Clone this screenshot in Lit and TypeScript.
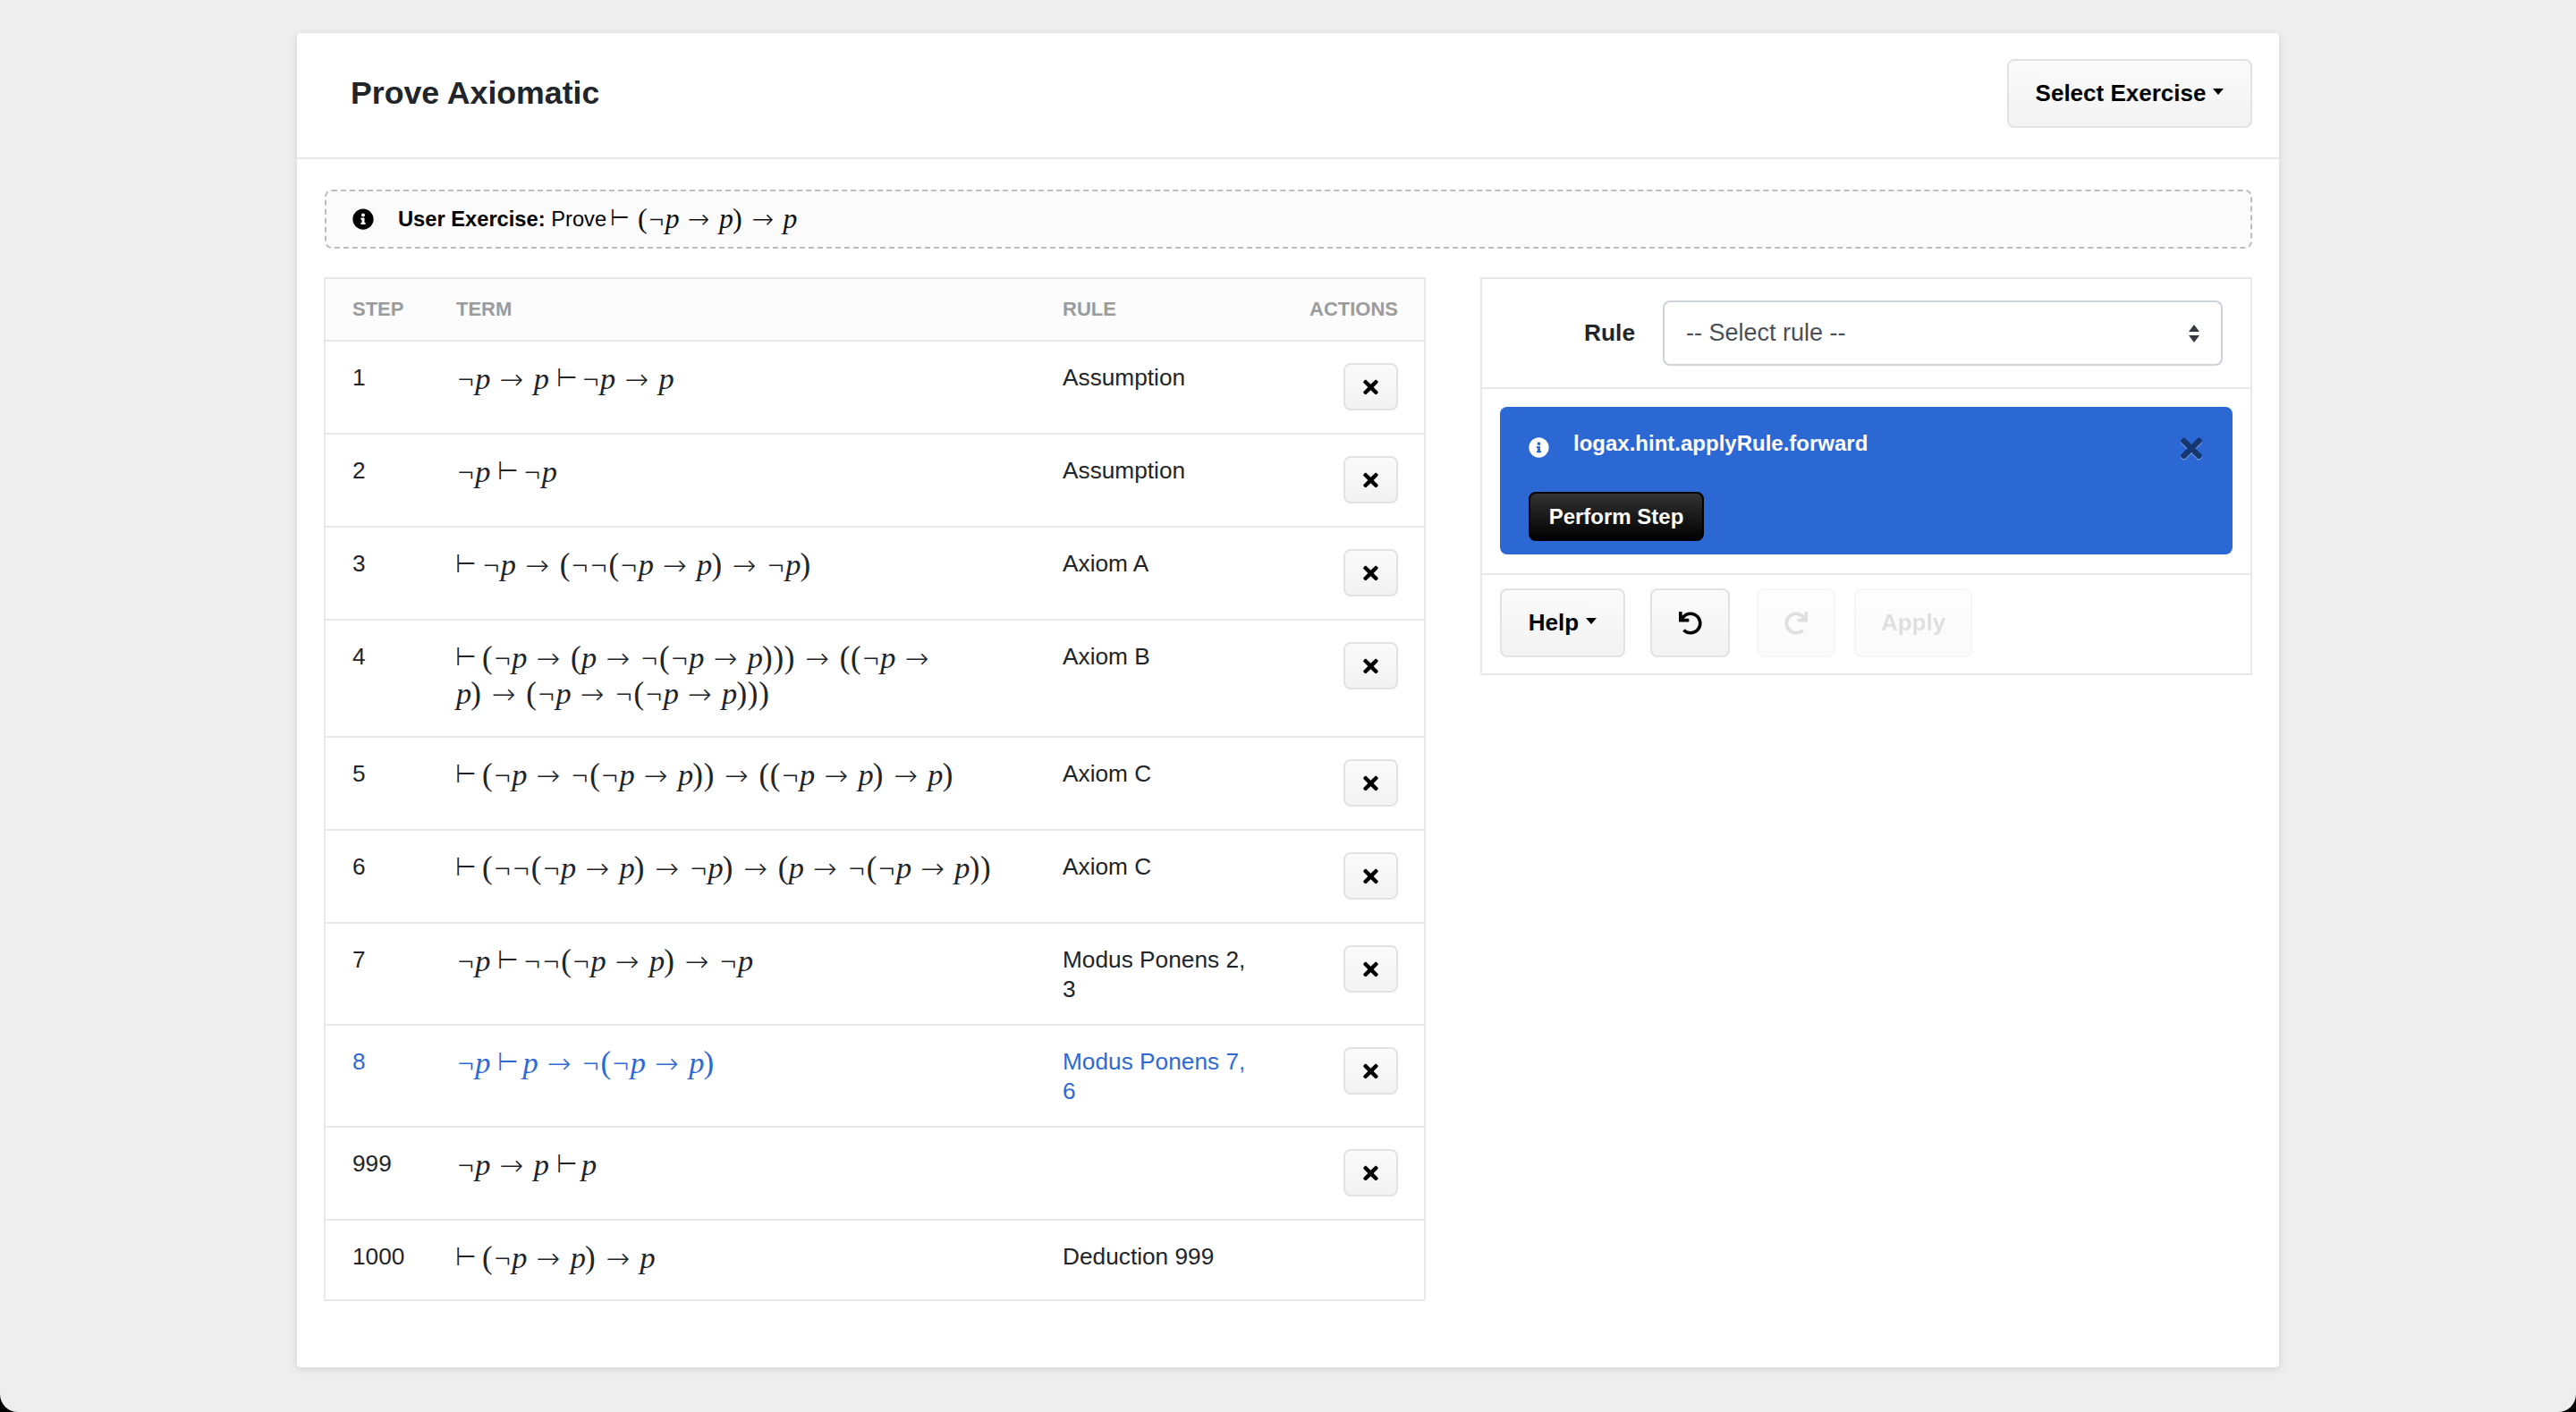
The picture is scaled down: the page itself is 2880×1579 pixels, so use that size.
import { LitElement, html, css, svg } from "lit";
import { customElement } from "lit/decorators.js";

// FontAwesome 5 style icons
const infoPath = "M256 8C119 8 8 119.1 8 256c0 137 111 248 248 248s248-111 248-248C504 119.1 393 8 256 8zm0 110c23.2 0 42 18.8 42 42s-18.8 42-42 42-42-18.8-42-42 18.8-42 42-42zm56 254c0 6.6-5.4 12-12 12h-88c-6.6 0-12-5.4-12-12v-24c0-6.6 5.4-12 12-12h12v-64h-12c-6.6 0-12-5.4-12-12v-24c0-6.6 5.4-12 12-12h64c6.6 0 12 5.4 12 12v100h12c6.6 0 12 5.4 12 12v24z";
const timesPath = "M242.72 256l100.07-100.07c12.28-12.28 12.28-32.19 0-44.48l-22.24-22.24c-12.28-12.28-32.19-12.28-44.48 0L176 189.28 75.93 89.21c-12.28-12.28-32.19-12.28-44.48 0L9.21 111.45c-12.28 12.28-12.28 32.19 0 44.48L109.28 256 9.21 356.07c-12.28 12.28-12.28 32.19 0 44.48l22.24 22.24c12.28 12.28 32.2 12.28 44.48 0L176 322.72l100.07 100.07c12.28 12.28 32.2 12.28 44.48 0l22.24-22.24c12.28-12.28 12.28-32.19 0-44.48L242.72 256z";
const undoPath = "M212.333 224.333H12c-6.627 0-12-5.373-12-12V12C0 5.373 5.373 0 12 0h48c6.627 0 12 5.373 12 12v78.112C117.773 39.279 184.26 7.47 258.175 8.007c136.906.994 246.448 111.623 246.157 248.532C504.041 393.258 393.12 504 256.333 504c-64.089 0-122.496-24.313-166.51-64.215-5.099-4.622-5.334-12.554-.467-17.42l33.967-33.967c4.474-4.474 11.662-4.717 16.401-.525C170.76 415.336 211.58 432 256.333 432c97.268 0 176-78.716 176-176 0-97.267-78.716-176-176-176-58.496 0-110.28 28.476-142.274 72.333h98.274c6.627 0 12 5.373 12 12v48c0 6.627-5.373 12-12 12z";
const redoPath = "M500.33 0h-47.41a12 12 0 0 0-12 12.57l4 82.76A247.42 247.42 0 0 0 256 8C119.34 8 7.9 119.53 8 256.19 8.1 393.07 119.1 504 256 504a247.1 247.1 0 0 0 166.18-63.91 12 12 0 0 0 .48-17.43l-34-34a12 12 0 0 0-16.38-.55A176 176 0 1 1 402.1 157.8l-101.53-4.87a12 12 0 0 0-12.57 12v47.41a12 12 0 0 0 12 12h200.33a12 12 0 0 0 12-12V12a12 12 0 0 0-12-12z";

const icon = (d: string, cls: string, vb = "0 0 512 512") =>
  html`<svg class=${cls} viewBox=${vb} fill="currentColor">${svg`<path d=${d}></path>`}</svg>`;

// formulas are written with ~ for negation, > for implication, | for turnstile
const tokenClass: Record<string, string> = {
  "p": "mi",
  "~": "neg",
  ">": "arrow",
  "|": "turn",
  "(": "par",
  ")": "par",
};
const glyphs: Record<string, string> = { "p": "p", "~": "¬", ">": "→", "|": "⊢", "(": "(", ")": ")" };

const formula = (src: string) =>
  src.split("\n").map(
    (line) => html`<div class="mline">${[...line].map(
      (c, i) => html`<span class="${tokenClass[c]}${i === 0 ? " first" : ""}">${glyphs[c]}</span>`
    )}</div>`
  );

const steps = [
  { n: "1", term: "~p>p|~p>p", rule: "Assumption", del: true },
  { n: "2", term: "~p|~p", rule: "Assumption", del: true },
  { n: "3", term: "|~p>(~~(~p>p)>~p)", rule: "Axiom A", del: true },
  { n: "4", term: "|(~p>(p>~(~p>p)))>((~p>\np)>(~p>~(~p>p)))", rule: "Axiom B", del: true },
  { n: "5", term: "|(~p>~(~p>p))>((~p>p)>p)", rule: "Axiom C", del: true },
  { n: "6", term: "|(~~(~p>p)>~p)>(p>~(~p>p))", rule: "Axiom C", del: true },
  { n: "7", term: "~p|~~(~p>p)>~p", rule: "Modus Ponens 2, 3", del: true },
  { n: "8", term: "~p|p>~(~p>p)", rule: "Modus Ponens 7, 6", del: true, active: true },
  { n: "999", term: "~p>p|p", rule: "", del: true },
  { n: "1000", term: "|(~p>p)>p", rule: "Deduction 999", del: false },
];

@customElement("app-root")
export class AppRoot extends LitElement {
  static styles = css`
    :host {
      display: block;
      background: #000;
      font-family: "Liberation Sans", Arial, sans-serif;
      font-size: 26.25px;
      color: #212529;
    }
    * {
      box-sizing: border-box;
    }
    .page {
      height: 1579px;
      padding-top: 37px;
      background: #eeeeee;
      border-radius: 0 0 20px 20px;
    }
    .card {
      width: 2216px;
      height: 1492px;
      margin: 0 auto;
      background: #fff;
      border-radius: 4px;
      box-shadow: 0 2px 8px rgba(0, 0, 0, 0.12);
    }
    .head {
      display: flex;
      align-items: center;
      justify-content: space-between;
      height: 141px;
      padding: 0 30px 4px 60px;
      border-bottom: 2px solid #e8e8e8;
    }
    h1 {
      margin: 0;
      font-size: 35.7px;
      font-weight: 700;
    }
    .content {
      padding: 34px 30px 0 31px;
    }
    .exercise {
      display: flex;
      align-items: center;
      height: 66px;
      padding: 0 29px;
      border: 2px dashed #bdbdbd;
      border-radius: 8px;
      background: #fbfbfb;
      color: #000;
      font-size: 23.7px;
      white-space: pre;
    }
    .exercise .info {
      margin-right: 27px;
    }
    .info {
      width: 24px;
      height: 24px;
      flex: none;
    }
    .columns {
      display: grid;
      grid-template-columns: 1231px 863px;
      gap: 61px;
      margin-top: 32px;
      align-items: start;
    }

    table {
      width: 1232px;
      margin-left: -1px;
      table-layout: fixed;
      border-collapse: collapse;
      border: 2px solid #e8e8e8;
    }
    col.c-step { width: 131px; }
    col.c-term { width: 678px; }
    col.c-rule { width: 264px; }
    th {
      height: 70px;
      padding: 0 16px;
      text-align: left;
      vertical-align: middle;
      font-size: 22px;
      font-weight: 700;
      color: #9b9b9b;
      text-transform: uppercase;
      background: #fcfcfc;
      border-bottom: 2px solid #e8e8e8;
    }
    td {
      padding: 24px 16px 22px;
      vertical-align: top;
      line-height: 33px;
      border-bottom: 2px solid #e8e8e8;
    }
    tr:last-child td {
      border-bottom: 0;
    }
    th:first-child,
    td:first-child {
      padding-left: 30px;
      padding-right: 0;
    }
    th:last-child {
      text-align: right;
      padding: 0 29px 0 0;
    }
    td.term {
      padding: 20px 16px 27px;
    }
    td.rule {
      padding-right: 40px;
    }
    td.act {
      padding: 24px 29px 25px 0;
      text-align: right;
    }
    tr.active td {
      color: #2f6ad2;
    }
    .mline {
      white-space: nowrap;
      height: 41px;
      line-height: 41px;
      font-family: "Liberation Serif", "DejaVu Serif", serif;
      font-size: 31.8px;
    }
    .exercise .mline {
      color: #111;
      font-size: 29.3px;
      margin: 0 0 3px 5px;
    }
    .exercise .turn.first {
      margin-right: 0.5em;
    }
    .mline span {
      display: inline-block;
      text-align: center;
    }
    .mi {
      font-style: italic;
      font-size: 1.08em;
      width: 0.466em;
    }
    .neg {
      width: 0.667em;
    }
    .par {
      width: 0.354em;
      font-size: 1.1em;
      font-weight: 400;
    }
    /* KaTeX relation spacing: 0.2778em on each side of the glyph */
    .arrow {
      width: 1em;
      margin: 0 0.2778em;
      font-family: "DejaVu Sans", sans-serif;
      font-weight: 200;
    }
    .turn {
      width: 0.719em;
      margin: 0 0.33em;
      font-family: "DejaVu Sans", sans-serif;
      font-weight: 200;
      font-size: 0.85em;
      vertical-align: 3px;
    }
    .turn.first {
      margin-left: -0.03em;
      margin-right: 0.37em;
    }

    .btn {
      display: inline-flex;
      align-items: center;
      justify-content: center;
      font: 700 26px "Liberation Sans", Arial, sans-serif;
      color: #000;
      background: linear-gradient(#fbfbfb, #f2f2f2);
      border: 2px solid #e2e2e2;
      border-radius: 8px;
      padding: 0;
    }
    .caret {
      width: 0;
      height: 0;
      margin-left: 8px;
      margin-bottom: 5px;
      border-top: 7px solid currentColor;
      border-left: 6px solid transparent;
      border-right: 6px solid transparent;
    }
    .select-ex {
      width: 274px;
      height: 77px;
    }
    .del {
      width: 61px;
      height: 53px;
    }
    .del svg {
      width: 17px;
      height: 24px;
    }

    .panel {
      border: 2px solid #e8e8e8;
    }
    .form-row {
      display: flex;
      align-items: center;
      height: 123px;
      padding: 0 31px 0 0;
      border-bottom: 2px solid #e8e8e8;
    }
    label {
      width: 171px;
      text-align: right;
      font-weight: 700;
      margin-right: 31px;
    }
    .select {
      flex: 1;
      display: flex;
      align-items: center;
      justify-content: space-between;
      height: 73px;
      padding: 0 22px 0 24px;
      border: 2px solid #ced4da;
      border-radius: 8px;
      color: #495057;
      font-size: 27px;
    }
    .select svg {
      width: 16px;
      height: 20px;
    }
    .alert-wrap {
      padding: 20px 20px 21px;
      border-bottom: 2px solid #e8e8e8;
    }
    .alert {
      display: flex;
      height: 165px;
      flex-direction: column;
      justify-content: space-between;
      padding: 26px 32px 15px;
      border-radius: 8px;
      background: #2c68d3;
      color: #fff;
    }
    .alert-top {
      display: flex;
      align-items: flex-start;
      font-weight: 700;
      font-size: 24px;
      line-height: 30px;
    }
    .alert-top .info {
      width: 23px;
      height: 23px;
      margin: 8px 27px 0 0;
    }
    .alert-top span {
      flex: 1;
    }
    .close {
      width: 24px;
      height: 25px;
      margin: 8px 2px 0 0;
      color: #163672;
      filter: drop-shadow(0 1px 0 rgba(255, 255, 255, 0.5));
    }
    .perform {
      width: 196px;
      height: 55px;
      font: 700 24px "Liberation Sans", Arial, sans-serif;
      color: #fff;
      background: linear-gradient(#333, #000);
      border: 2px solid #000;
      border-radius: 8px;
    }
    .tools {
      display: flex;
      height: 110px;
      padding: 15px 20px 0;
    }
    .tools .btn {
      height: 77px;
    }
    .help { width: 140px; margin-right: 28px; }
    .undo { width: 89px; margin-right: 30px; }
    .redo { width: 88px; margin-right: 21px; }
    .apply { width: 132px; }
    .tools svg {
      width: 26px;
      height: 26px;
    }
    .btn.off {
      opacity: 0.3;
      color: #999;
    }
  `;

  render() {
    return html`
      <div class="page">
        <div class="card">
          <div class="head">
            <h1>Prove Axiomatic</h1>
            <button class="btn select-ex">Select Exercise<span class="caret"></span></button>
          </div>
          <div class="content">
            <div class="exercise">
              ${icon(infoPath, "info")}<b>User Exercise:</b> Prove${formula("|(~p>p)>p")}
            </div>
            <div class="columns">
              <table>
                <colgroup>
                  <col class="c-step" /><col class="c-term" /><col class="c-rule" /><col />
                </colgroup>
                <thead>
                  <tr><th>Step</th><th>Term</th><th>Rule</th><th>Actions</th></tr>
                </thead>
                <tbody>
                  ${steps.map(
                    (s) => html`
                      <tr class=${s.active ? "active" : ""}>
                        <td>${s.n}</td>
                        <td class="term">${formula(s.term)}</td>
                        <td class="rule">${s.rule}</td>
                        <td class="act">
                          ${s.del ? html`<button class="btn del">${icon(timesPath, "", "0 0 352 512")}</button>` : ""}
                        </td>
                      </tr>
                    `
                  )}
                </tbody>
              </table>
              <div class="panel">
                <div class="form-row">
                  <label>Rule</label>
                  <div class="select">
                    -- Select rule --
                    <svg viewBox="0 0 16 20" fill="#343a40"><path d="M8 0l6 8H2zM8 20l-6-8h12z"></path></svg>
                  </div>
                </div>
                <div class="alert-wrap">
                  <div class="alert">
                    <div class="alert-top">
                      ${icon(infoPath, "info")}
                      <span>logax.hint.applyRule.forward</span>
                      ${icon(timesPath, "close", "0 80 352 352")}
                    </div>
                    <button class="perform">Perform Step</button>
                  </div>
                </div>
                <div class="tools">
                  <button class="btn help">Help<span class="caret"></span></button>
                  <button class="btn undo">${icon(undoPath, "")}</button>
                  <button class="btn redo off">${icon(redoPath, "")}</button>
                  <button class="btn apply off">Apply</button>
                </div>
              </div>
            </div>
          </div>
        </div>
      </div>
    `;
  }
}
